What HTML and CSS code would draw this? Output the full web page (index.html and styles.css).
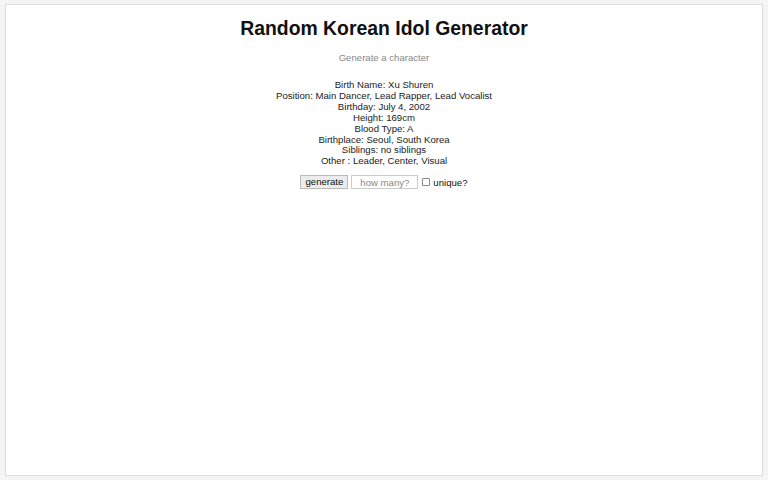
FILE: index.html
```html
<!DOCTYPE html>
<html lang="en">
<head>
    <meta charset="UTF-8">
    <meta name="viewport" content="width=device-width, initial-scale=1.0">
    <title>Random Korean Idol Generator</title>
    <link rel="stylesheet" href="styles.css">
</head>
<body>
<div id="container">
    <h1>Random Korean Idol Generator</h1>
    <p class="subtitle">Generate a character</p>

    <div id="result">
        <div>Birth Name: Xu Shuren</div>
        <div>Position: Main Dancer, Lead Rapper, Lead Vocalist</div>
        <div>Birthday: July 4, 2002</div>
        <div>Height: 169cm</div>
        <div>Blood Type: A</div>
        <div>Birthplace: Seoul, South Korea</div>
        <div>Siblings: no siblings</div>
        <div>Other : Leader, Center, Visual</div>
    </div>

    <div class="controls">
        <button type="button">generate</button>
        <input type="text" placeholder="how many?">
        <label><input type="checkbox" class="check"> unique?</label>
    </div>
</div>
</body>
</html>
```

FILE: styles.css
```css
body {
    margin: 4px 5px 4px 5px;
    background-color: #f4f4f4;
    font-family: "Liberation Sans", Arial, sans-serif;
}

#container {
    height: 472px;
    box-sizing: border-box;
    background-color: #fff;
    border: 1px solid #dcdcdc;
    text-align: center;
}

h1 {
    margin: 12px 0 0;
    font-size: 19.4px;
    line-height: 23px;
    color: #111;
}

.subtitle {
    margin: 12px 0 0;
    font-size: 9.6px;
    line-height: 12px;
    color: #888;
}

#result {
    margin-top: 16px;
    font-size: 9.6px;
    line-height: 10.9px;
    color: #222;
}

.controls {
    margin-top: 8px;
    font-size: 9.6px;
    display: flex;
    justify-content: center;
    align-items: center;
    gap: 3px;
}

button {
    font-family: inherit;
    font-size: 9.6px;
    padding: 0 4px;
    height: 14px;
    line-height: 10px;
    background-color: #ececec;
    border: 1px solid #bbb;
    color: #111;
}

input[type="text"] {
    font-family: inherit;
    font-size: 9.6px;
    width: 67px;
    height: 14px;
    box-sizing: border-box;
    padding: 0 2px;
    border: 1px solid #ccc;
    text-align: center;
}

input::placeholder {
    color: #888;
}

label {
    display: flex;
    align-items: center;
    gap: 3px;
    color: #111;
}

.check {
    appearance: none;
    width: 8px;
    height: 8px;
    margin: 0 0 0 1px;
    border: 1px solid #888;
    border-radius: 1px;
    background: #fff;
}
```
